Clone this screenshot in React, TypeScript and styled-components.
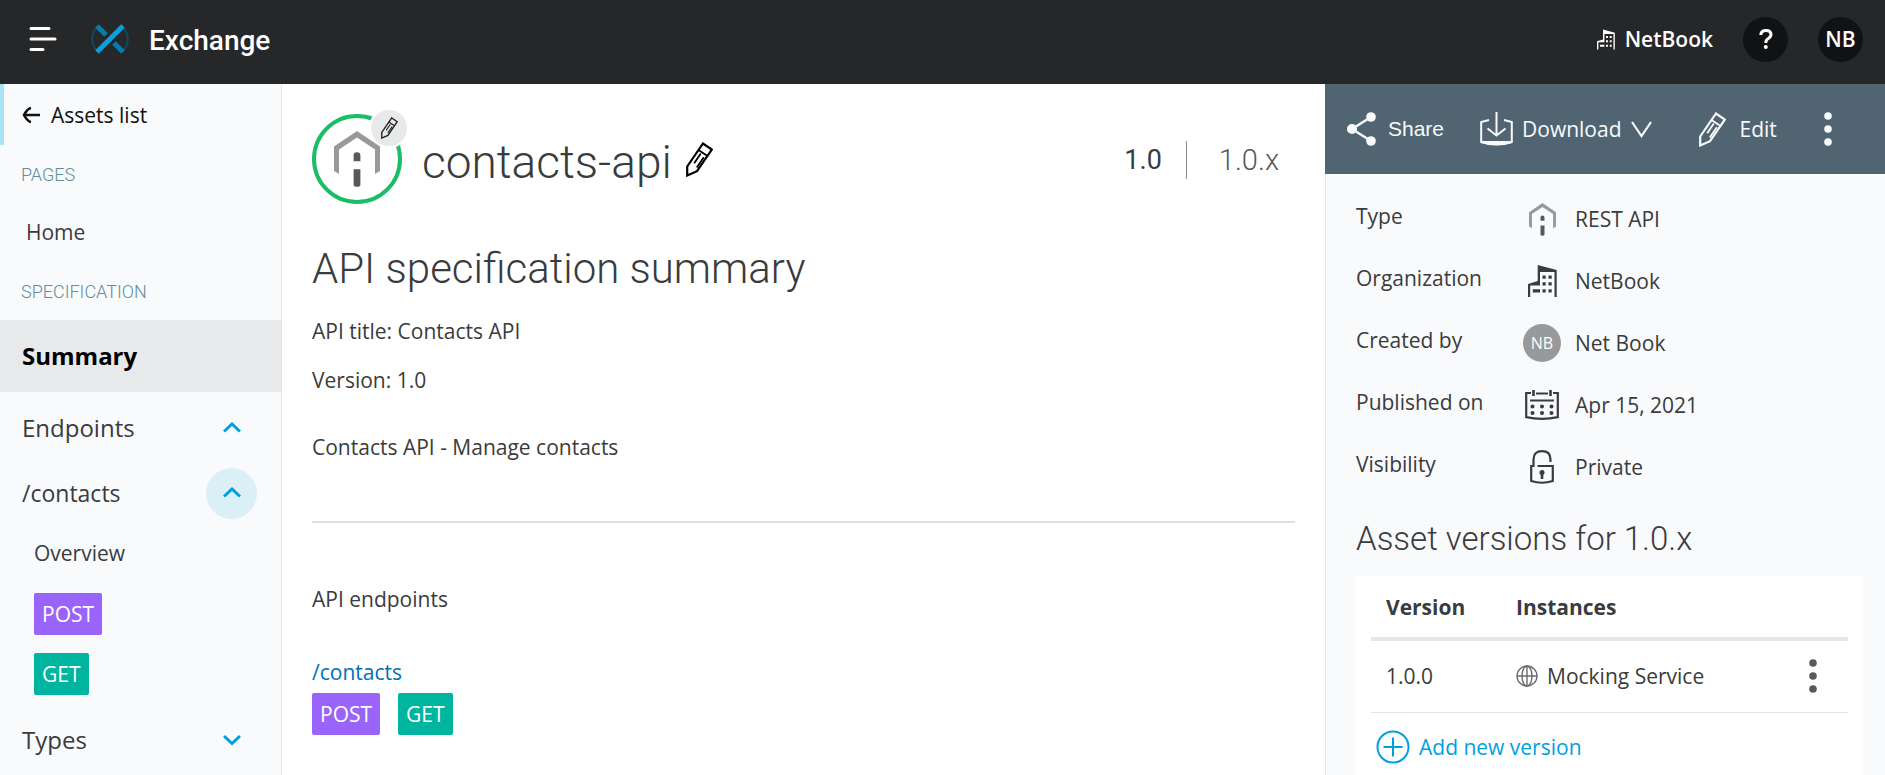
import React from "react";
import styled, { createGlobalStyle } from "styled-components";

const GlobalStyle = createGlobalStyle`
  *, *::before, *::after { box-sizing: border-box; }
  body { margin: 0; background: #fff; color: #3a3b3c; font: 21px/30px "Open Sans", sans-serif; }
  h1, h2, h3, p, dl, dd, ul { margin: 0; padding: 0; }
  ul { list-style: none; }
  a { color: inherit; text-decoration: none; }
  button { border: 0; padding: 0; background: none; color: inherit; font: inherit; cursor: pointer; }
  svg { display: block; flex: none; }
`;

const headingFont = `Roboto, "Open Sans", sans-serif`;

const Shell = styled.div`
  display: flex;
  flex-direction: column;
  min-height: 100vh;
`;

const TopBar = styled.header`
  display: flex;
  align-items: center;
  height: 84px;
  padding: 0 22px 6px 29px;
  background: #262728;
  color: #fff;
`;

const MenuButton = styled.button`
  margin-right: 34px;
`;

const Brand = styled.a`
  display: flex;
  align-items: center;
  gap: 20px;
  margin-right: auto;
  font: 500 28px/36px ${headingFont};
`;

const BrandName = styled.span`
  padding-top: 3px;
`;

const OrgButton = styled.button`
  display: flex;
  align-items: center;
  gap: 10px;
  margin-right: 30px;
  font-weight: 600;
`;

const RoundButton = styled.button`
  width: 45px;
  height: 45px;
  border-radius: 50%;
  background: #111214;
  font-weight: 600;
  display: flex;
  align-items: center;
  justify-content: center;
  & + & { margin-left: 30px; }
`;

const Columns = styled.div`
  display: flex;
  flex: 1;
`;

const Sidebar = styled.nav`
  flex: 0 0 282px;
  border-right: 1px solid #e3e5e8;
  background: #f9fafc;
`;

const BackLink = styled.a`
  display: flex;
  align-items: center;
  gap: 11px;
  height: 61px;
  padding-left: 18px;
  border-left: 4px solid #abe2f5;
  color: #111;
`;

const GroupLabel = styled.h3`
  padding: 2px 0 0 21px;
  color: #5f8f9a;
  font: 300 18px/56px ${headingFont};
`;

const PageLink = styled.a`
  display: block;
  padding-left: 26px;
  line-height: 59px;
`;

const SummaryLink = styled.a`
  display: block;
  padding-left: 22px;
  background: #e8e9eb;
  color: #000;
  font-size: 24px;
  font-weight: 700;
  line-height: 72px;
`;

const TreeRow = styled.div<{ $height: number }>`
  display: flex;
  align-items: center;
  justify-content: space-between;
  height: ${(p) => p.$height}px;
  padding: 0 24px 0 22px;
  font-size: 24px;
`;

const ToggleButton = styled.button<{ $active?: boolean }>`
  display: flex;
  align-items: center;
  justify-content: center;
  width: 51px;
  height: 51px;
  border-radius: 50%;
  background: ${(p) => (p.$active ? "#dbeff7" : "transparent")};
  color: #00a0df;
`;

const ResourceLink = styled.a`
  font-size: 23px;
`;

const SubItem = styled.li<{ $height: number }>`
  display: flex;
  align-items: center;
  height: ${(p) => p.$height}px;
  padding-left: 34px;
`;

const Method = styled.a<{ $kind: "post" | "get" }>`
  display: inline-block;
  padding: 0 8px;
  border-radius: 2px;
  background: ${(p) => (p.$kind === "post" ? "#9a63f9" : "#00b5a0")};
  color: #fff;
  line-height: 42px;
`;

const Main = styled.main`
  flex: 1;
  min-width: 0;
  padding: 30px;
`;

const TitleRow = styled.div`
  display: flex;
  align-items: center;
  height: 90px;
`;

const AssetIcon = styled.div`
  position: relative;
  display: flex;
  align-items: center;
  justify-content: center;
  width: 90px;
  height: 90px;
  border: 4px solid #1bbd66;
  border-radius: 50%;
`;

const IconEdit = styled.button`
  position: absolute;
  top: -10px;
  right: -11px;
  display: flex;
  align-items: center;
  justify-content: center;
  width: 40px;
  height: 40px;
  border: 2px solid #fff;
  border-radius: 50%;
  background: #e8e9eb;
  color: #222;
`;

const Title = styled.h1`
  margin: 6px 14px 0 20px;
  font: 300 46px/52px ${headingFont};
`;

const TitleEdit = styled.button`
  color: #000;
`;

const Versions = styled.div`
  display: flex;
  align-items: center;
  margin: 2px 16px 0 auto;
  font: 400 27px/38px ${headingFont};
`;

const VersionGroup = styled.span`
  margin-left: 24px;
  padding-left: 32px;
  border-left: 1px solid #8d8f91;
  color: #58595a;
  font-size: 29px;
  font-weight: 300;
`;

const SectionTitle = styled.h2`
  margin: 41px 0 23px;
  font: 300 42px/48px ${headingFont};
`;

const Line = styled.p`
  margin-bottom: 19px;
`;

const Description = styled.p`
  margin: 37px 0 59px;
`;

const Divider = styled.hr`
  height: 2px;
  margin: 0 0 61px;
  border: 0;
  background: #e0e0e0;
`;

const EndpointLink = styled.a`
  display: block;
  margin: 43px 0 6px;
  color: #0070b8;
`;

const MethodList = styled.div`
  display: flex;
  gap: 18px;
`;

const Details = styled.aside`
  display: flex;
  flex-direction: column;
  flex: 0 0 560px;
  border-left: 1px solid #e3e5e8;
  background: #f9fafc;
`;

const Toolbar = styled.div`
  display: flex;
  align-items: center;
  height: 90px;
  margin-left: -1px;
  padding-left: 22px;
  background: #506571;
  color: #f9fafc;
`;

const ToolButton = styled.button<{ $gap: number; $after: number }>`
  display: flex;
  align-items: center;
  gap: ${(p) => p.$gap}px;
  margin-right: ${(p) => p.$after}px;
  font-weight: 500;
`;

const ShareLabel = styled.span`
  font: 21px/30px "Liberation Sans", Arial, sans-serif;
`;

const InfoList = styled.dl`
  display: grid;
  grid-template-columns: 167px 1fr;
  grid-auto-rows: 38px;
  row-gap: 24px;
  padding: 26px 22px 0 30px;
`;

const InfoLabel = styled.dt`
  line-height: 32px;
`;

const InfoValue = styled.dd`
  display: flex;
  align-items: center;
  gap: 14px;
`;

const IconSlot = styled.span`
  display: flex;
  align-items: center;
  justify-content: center;
  width: 38px;
  height: 38px;
`;

const Avatar = styled(IconSlot)`
  border-radius: 50%;
  background: #98999b;
  color: #fff;
  font-size: 16px;
`;

const VersionsTitle = styled.h2`
  margin: 33px 0 17px 30px;
  font: 300 33px/40px ${headingFont};
`;

const Card = styled.section`
  flex: 1;
  margin: 0 22px 0 30px;
  padding: 0 15px;
  background: #fff;
`;

const Table = styled.table`
  width: 100%;
  border-collapse: collapse;
  text-align: left;
`;

const HeadCell = styled.th<{ $width?: number }>`
  width: ${(p) => (p.$width ? `${p.$width}px` : "auto")};
  height: 63px;
  padding: 0 0 0 15px;
  border-bottom: 4px solid #e6e6e6;
  font-weight: 700;
`;

const Cell = styled.td`
  height: 73px;
  padding: 0 0 0 15px;
  border-bottom: 1px solid #e4e5e6;
`;

const Instance = styled.span`
  display: flex;
  align-items: center;
  gap: 9px;
`;

const RowMenu = styled.button`
  display: block;
  margin: 0 31px 0 auto;
  color: #58595a;
`;

const AddButton = styled.button`
  display: flex;
  align-items: center;
  gap: 9px;
  margin: 17px 0 0 5px;
  color: #00a0df;
`;

const Pencil = ({ width, height }: { width: number; height: number }) => (
  <svg width={width} height={height} viewBox="0 0 27 35" fill="none" stroke="currentColor" aria-hidden="true">
    <path d="M1.200 33.500V24.500L17 1.500L25.800 7.500L11 29.200L1.200 33.500Z" strokeWidth="2.200" />
    <path d="M12.500 8L21.500 14M14.800 11.500L8.200 21.300M17.800 15.300L10.800 25.500" strokeWidth="1.800" />
  </svg>
);

const Building = ({ width, height }: { width: number; height: number }) => (
  <svg width={width} height={height} viewBox="0 0 29 32" fill="currentColor" aria-hidden="true">
    <path d="M9.7 0L28.7 5V32H26.5V7H12V20.5H2.2V32H0V19L9.7 16Z" />
    <path d="M14.5 10.5h3.2v3.2h-3.2zM20.5 10.5h3.2v3.2h-3.2zM14.5 17.3h3.2v3.2h-3.2zM20.5 17.3h3.2v3.2h-3.2zM14.5 24.3h3.2v3.2h-3.2zM20.5 24.3h3.2v3.2h-3.2zM4.8 24.3H12v3.2H4.8z" />
  </svg>
);

const ApiMark = ({ width, height }: { width: number; height: number }) => (
  <svg width={width} height={height} viewBox="0 0 46 56" aria-hidden="true">
    <path fill="#98999b" d="M0 15.5L23 0L46 15.5V40L41 43V18.5L23 6.5L5 18.5V43L0 40Z" />
    <path fill="#58595a" d="M19.6 30.3V24.5Q19.6 21.2 23 21.2Q26.4 21.2 26.4 24.5V30.3ZM19.6 38.3H26.4V53.5Q26.4 55.8 23 55.8Q19.6 55.8 19.6 53.5Z" />
  </svg>
);

const Chevron = ({ down = false }: { down?: boolean }) => (
  <svg width="18" height="12" viewBox="0 0 18 12" fill="none" stroke="currentColor" strokeWidth="3" aria-hidden="true">
    <path d={down ? "M1 2L9 9.500L17 2" : "M1 9.500L9 2L17 9.500"} />
  </svg>
);

const Dots = () => (
  <svg width="8" height="34" viewBox="0 0 8 34" fill="currentColor" aria-hidden="true">
    <circle cx="4" cy="4" r="3.8" />
    <circle cx="4" cy="17" r="3.8" />
    <circle cx="4" cy="30" r="3.8" />
  </svg>
);

export default function App() {
  return (
    <Shell>
      <GlobalStyle />
      <TopBar>
        <MenuButton aria-label="Menu">
          <svg width="28" height="26" viewBox="0 0 28 26" stroke="#fff" strokeWidth="3" strokeLinecap="round">
            <path d="M2 2.5H20M2 13H26M2 23.5H14" />
          </svg>
        </MenuButton>
        <Brand href="#">
          <svg width="38" height="32" viewBox="0 0 38 32" fill="none" aria-hidden="true">
            <path d="M6 4A17.5 17.5 0 0 0 6 28M32 4A17.5 17.5 0 0 1 32 28" stroke="#12475c" strokeWidth="2" />
            <path d="M6 3L15 12M23 20L32 29" stroke="#0a7aa8" strokeWidth="5" />
            <path d="M6 29L32 3" stroke="#00a2e1" strokeWidth="5" />
          </svg>
          <BrandName>Exchange</BrandName>
        </Brand>
        <OrgButton>
          <Building width={18} height={21} />
          NetBook
        </OrgButton>
        <RoundButton aria-label="Help">
          <svg width="14" height="20" viewBox="0 0 14 20" fill="none" stroke="#fff" strokeWidth="3" aria-hidden="true">
            <path d="M1.8 6Q2 1.5 7 1.5Q12 1.5 12 5.6Q12 8 9 9.8Q6.8 11 6.8 14" />
            <circle cx="6.8" cy="18" r="2" fill="#fff" stroke="none" />
          </svg>
        </RoundButton>
        <RoundButton>NB</RoundButton>
      </TopBar>
      <Columns>
        <Sidebar>
          <BackLink href="#">
            <svg width="18" height="16" viewBox="0 0 18 16" fill="none" stroke="currentColor" strokeWidth="2.6" aria-hidden="true">
              <path d="M18 8H2M9 1Q5.500 1.500 2 8Q5.500 14.500 9 15" />
            </svg>
            Assets list
          </BackLink>
          <GroupLabel>PAGES</GroupLabel>
          <PageLink href="#">Home</PageLink>
          <GroupLabel>SPECIFICATION</GroupLabel>
          <SummaryLink href="#">Summary</SummaryLink>
          <TreeRow $height={72}>
            <a href="#">Endpoints</a>
            <ToggleButton aria-label="Collapse endpoints"><Chevron /></ToggleButton>
          </TreeRow>
          <TreeRow $height={58}>
            <ResourceLink href="#">/contacts</ResourceLink>
            <ToggleButton $active aria-label="Collapse contacts"><Chevron /></ToggleButton>
          </TreeRow>
          <ul>
            <SubItem $height={62}><a href="#">Overview</a></SubItem>
            <SubItem $height={60}><Method $kind="post" href="#">POST</Method></SubItem>
            <SubItem $height={60}><Method $kind="get" href="#">GET</Method></SubItem>
          </ul>
          <TreeRow $height={71}>
            <a href="#">Types</a>
            <ToggleButton aria-label="Expand types"><Chevron down /></ToggleButton>
          </TreeRow>
        </Sidebar>
        <Main>
          <TitleRow>
            <AssetIcon>
              <ApiMark width={46} height={56} />
              <IconEdit aria-label="Edit icon"><Pencil width={17} height={22} /></IconEdit>
            </AssetIcon>
            <Title>contacts-api</Title>
            <TitleEdit aria-label="Edit name"><Pencil width={27} height={35} /></TitleEdit>
            <Versions>
              <span>1.0</span>
              <VersionGroup>1.0.x</VersionGroup>
            </Versions>
          </TitleRow>
          <SectionTitle>API specification summary</SectionTitle>
          <Line>API title: Contacts API</Line>
          <Line>Version: 1.0</Line>
          <Description>Contacts API - Manage contacts</Description>
          <Divider />
          <p>API endpoints</p>
          <EndpointLink href="#">/contacts</EndpointLink>
          <MethodList>
            <Method $kind="post" href="#">POST</Method>
            <Method $kind="get" href="#">GET</Method>
          </MethodList>
        </Main>
        <Details>
          <Toolbar>
            <ToolButton $gap={12} $after={36}>
              <svg width="29" height="34" viewBox="0 0 29 34" fill="currentColor" stroke="currentColor" strokeWidth="2.5" aria-hidden="true">
                <path d="M24 5L5 17L24 29" fill="none" />
                <circle cx="5" cy="17" r="3.8" />
                <circle cx="24" cy="5" r="3.6" />
                <circle cx="24" cy="29" r="3.6" />
              </svg>
              <ShareLabel>Share</ShareLabel>
            </ToolButton>
            <ToolButton $gap={9} $after={47}>
              <svg width="33" height="34" viewBox="0 0 33 34" fill="none" stroke="currentColor" strokeWidth="2" aria-hidden="true">
                <path d="M9 8L1.200 10V30Q16.500 35 31.800 30V10L24 8" />
                <path d="M1 29H32V31Q16.500 35.500 1 31Z" fill="currentColor" stroke="none" />
                <path d="M16.500 0V23M7.500 16.500L16.500 23.500L25.500 16.500" />
              </svg>
              Download
              <svg width="21" height="17" viewBox="0 0 21 17" fill="none" stroke="currentColor" strokeWidth="2.200" aria-hidden="true">
                <path d="M1 1L10.500 15L20 1" />
              </svg>
            </ToolButton>
            <ToolButton $gap={14} $after={47}>
              <Pencil width={27} height={35} />
              Edit
            </ToolButton>
            <ToolButton $gap={0} $after={0} aria-label="More actions"><Dots /></ToolButton>
          </Toolbar>
          <InfoList>
            <InfoLabel>Type</InfoLabel>
            <InfoValue><IconSlot><ApiMark width={27} height={33} /></IconSlot>REST API</InfoValue>
            <InfoLabel>Organization</InfoLabel>
            <InfoValue><IconSlot><Building width={29} height={32} /></IconSlot>NetBook</InfoValue>
            <InfoLabel>Created by</InfoLabel>
            <InfoValue><Avatar>NB</Avatar>Net Book</InfoValue>
            <InfoLabel>Published on</InfoLabel>
            <InfoValue>
              <IconSlot>
                <svg width="34" height="30" viewBox="0 0 34 30" fill="none" stroke="currentColor" strokeWidth="2.200" aria-hidden="true">
                  <path d="M6 3H1.200V27.200Q17 30.500 32.800 27.200V3H28M11 3.500H23M5 10.500H29" />
                  <path d="M8.500 0V6M25.500 0V6" strokeWidth="2.600" />
                  <g fill="currentColor" stroke="none">
                    <circle cx="7.500" cy="16.500" r="2" /><circle cx="17" cy="16.500" r="2" /><circle cx="26.500" cy="16.500" r="2" />
                    <circle cx="7.500" cy="23" r="2" /><circle cx="17" cy="23" r="2" /><circle cx="26.500" cy="23" r="2" />
                  </g>
                </svg>
              </IconSlot>
              Apr 15, 2021
            </InfoValue>
            <InfoLabel>Visibility</InfoLabel>
            <InfoValue>
              <IconSlot>
                <svg width="24" height="34" viewBox="0 0 24 34" fill="none" stroke="currentColor" strokeWidth="2.200" aria-hidden="true">
                  <path d="M4 16H1.200V31Q12 34.500 22.800 31V16H7.500M3.500 17V9.500Q3.500 1.200 12 1.200Q20.500 1.200 20.500 9.500V12" />
                  <path d="M12 22V29" strokeWidth="2.600" />
                  <circle cx="12" cy="22.500" r="2.500" fill="currentColor" stroke="none" />
                </svg>
              </IconSlot>
              Private
            </InfoValue>
          </InfoList>
          <VersionsTitle>Asset versions for 1.0.x</VersionsTitle>
          <Card>
            <Table>
              <thead>
                <tr>
                  <HeadCell $width={130}>Version</HeadCell>
                  <HeadCell>Instances</HeadCell>
                  <HeadCell aria-label="Actions" />
                </tr>
              </thead>
              <tbody>
                <tr>
                  <Cell>1.0.0</Cell>
                  <Cell>
                    <Instance>
                      <svg width="22" height="22" viewBox="0 0 22 22" fill="none" stroke="#6a6b6c" strokeWidth="1.400" aria-hidden="true">
                        <circle cx="11" cy="11" r="10" />
                        <ellipse cx="11" cy="11" rx="5" ry="10" />
                        <path d="M11 1V21M1 11H21" />
                      </svg>
                      Mocking Service
                    </Instance>
                  </Cell>
                  <Cell><RowMenu aria-label="Version actions"><Dots /></RowMenu></Cell>
                </tr>
              </tbody>
            </Table>
            <AddButton>
              <svg width="34" height="34" viewBox="0 0 34 34" fill="none" stroke="currentColor" strokeWidth="2" aria-hidden="true">
                <circle cx="17" cy="17" r="15.500" />
                <path d="M17 7.500V26.500M7.500 17H26.500" />
              </svg>
              Add new version
            </AddButton>
          </Card>
        </Details>
      </Columns>
    </Shell>
  );
}
